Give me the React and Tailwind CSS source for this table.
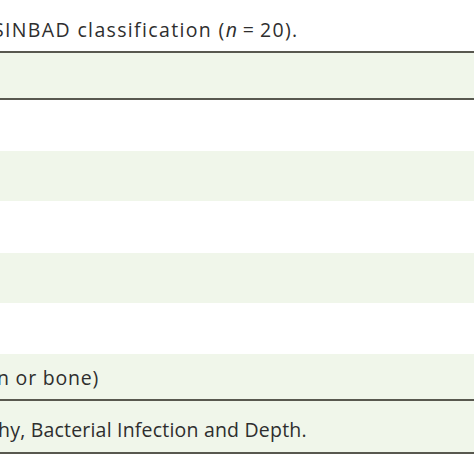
export default function App() {
  const rows = [
    { h: 'h-[51px]', bg: 'bg-white' },
    { h: 'h-[50px]', bg: 'bg-[#f0f6ea]' },
    { h: 'h-[52px]', bg: 'bg-white' },
    { h: 'h-[50px]', bg: 'bg-[#f0f6ea]' },
    { h: 'h-[51px]', bg: 'bg-white' },
  ]

  return (
    <div className="w-[474px] h-[474px] bg-white overflow-hidden text-[#2e2e2e]" style={{ fontFamily: '"Open Sans", Roboto, sans-serif' }}>
      {/* caption */}
      <div className="h-[51px] flex items-center pt-[8px]">
        <p className="-ml-[7px] text-[19.5px] leading-none whitespace-nowrap tracking-[1.35px]">
          SINBAD classification (<i>n</i>&thinsp;=&thinsp;20).
        </p>
      </div>

      <div className="border-t-2 border-[#58584f]">
        <div className="h-[47px] bg-[#f0f6ea] border-b-2 border-[#58584f]"></div>
        {rows.map((r, i) => (
          <div key={i} className={`${r.h} ${r.bg}`}></div>
        ))}
        <div className="h-[45px] bg-[#f0f6ea] flex items-center pt-[2px]">
          <span className="-ml-[3px] text-[19.5px] leading-none whitespace-nowrap tracking-[0.8px]">n or bone)</span>
        </div>
      </div>

      {/* footnote */}
      <div className="h-[55px] bg-[#f0f6ea] border-y-2 border-[#58584f] flex items-center pt-[6px]">
        <span className="-ml-[2px] text-[19.5px] leading-none whitespace-nowrap tracking-[0.2px]">hy, Bacterial Infection and Depth.</span>
      </div>
    </div>
  )
}
